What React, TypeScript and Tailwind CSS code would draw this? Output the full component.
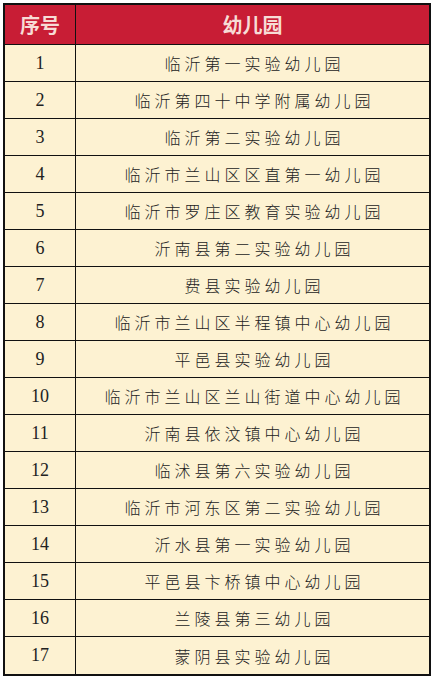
const rows = [
  "临沂第一实验幼儿园",
  "临沂第四十中学附属幼儿园",
  "临沂第二实验幼儿园",
  "临沂市兰山区区直第一幼儿园",
  "临沂市罗庄区教育实验幼儿园",
  "沂南县第二实验幼儿园",
  "费县实验幼儿园",
  "临沂市兰山区半程镇中心幼儿园",
  "平邑县实验幼儿园",
  "临沂市兰山区兰山街道中心幼儿园",
  "沂南县依汶镇中心幼儿园",
  "临沭县第六实验幼儿园",
  "临沂市河东区第二实验幼儿园",
  "沂水县第一实验幼儿园",
  "平邑县卞桥镇中心幼儿园",
  "兰陵县第三幼儿园",
  "蒙阴县实验幼儿园",
];

const cjk = "font-['Noto_Sans_CJK_SC',sans-serif]";

export default function App() {
  return (
    <div className="bg-white w-[434px] h-[677px] pt-[3px] pl-[3px]">
      <div className="w-[428px] border-2 border-[#111]">
        {/* header */}
        <div className="grid grid-cols-[70px_1fr] h-[40px] bg-[#c81d35] border-b border-[#111]">
          <div className={`flex items-center justify-center text-[20px] font-bold text-[#f7dcd6] ${cjk}`}>
            序号
          </div>
          <div className={`flex items-center justify-center border-l-[1.5px] border-[#111] text-[20px] font-bold text-[#f7dcd6] ${cjk}`}>
            幼儿园
          </div>
        </div>

        {/* rows */}
        {rows.map((name, idx) => (
          <div
            key={idx}
            className={`grid grid-cols-[70px_1fr] h-[37px] bg-[#fdf2d2] ${idx < rows.length - 1 ? "border-b border-[#111]" : ""}`}
          >
            <div className="flex items-center justify-center text-[18px] text-[#222] font-['Liberation_Serif',serif]">
              {idx + 1}
            </div>
            <div className={`flex items-center justify-center border-l-[1.5px] border-[#111] text-[16px] font-light text-[#222] tracking-[4px] pl-[4px] ${cjk}`}>
              {name}
            </div>
          </div>
        ))}
      </div>
    </div>
  );
}
